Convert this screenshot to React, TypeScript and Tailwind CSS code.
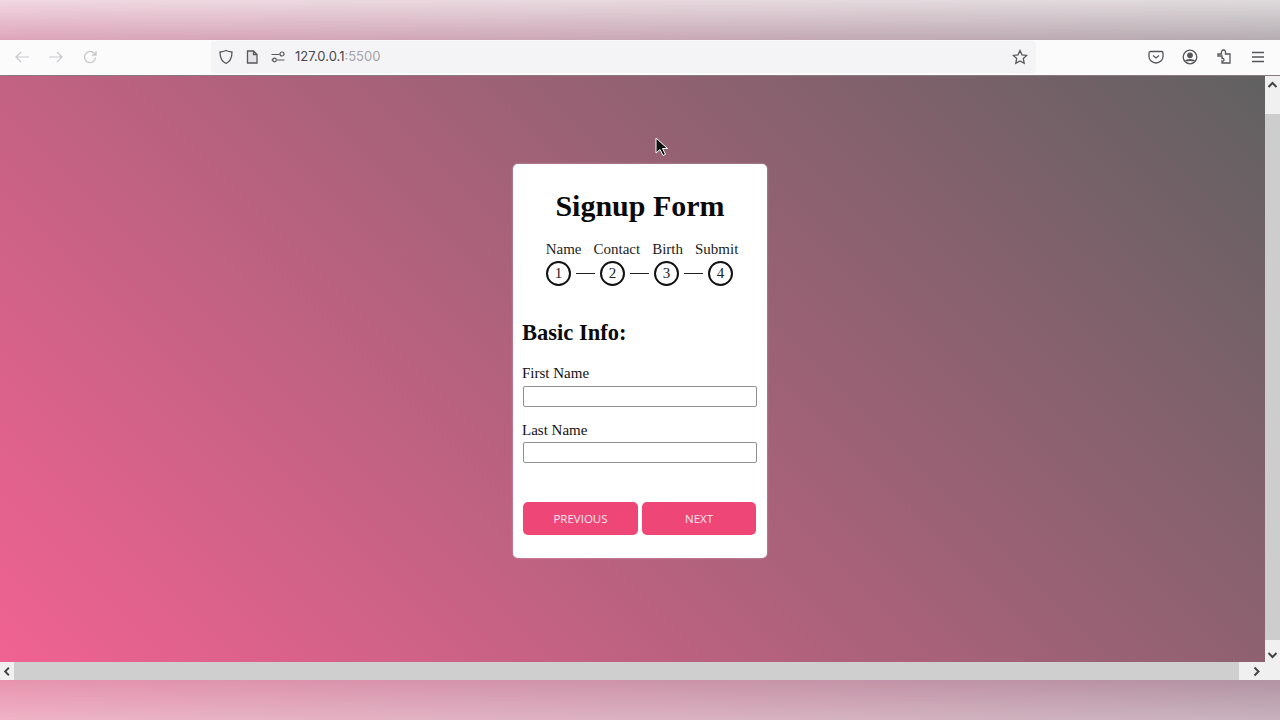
import React from 'react';

const serif = 'font-["Liberation_Serif",serif]';

const Toolbar: React.FC = () => (
  <div className="flex h-[36px] items-center bg-[#fbfbfc] border-b border-[#8a7a80] pb-[2px] font-['Inter',sans-serif]">
    <div className="flex w-[211px] items-center pl-[14px] gap-[18px] text-[#c9c9cc]">
      <svg width="16" height="16" viewBox="0 0 16 16" fill="none" stroke="currentColor" strokeWidth="1.2"><path d="M15 8H2M7 3L2 8l5 5" /></svg>
      <svg width="16" height="16" viewBox="0 0 16 16" fill="none" stroke="currentColor" strokeWidth="1.2"><path d="M1 8h13M9 3l5 5-5 5" /></svg>
      <svg width="16" height="16" viewBox="0 0 16 16" fill="none" stroke="currentColor" strokeWidth="1.4"><path d="M13.5 8.5A5.5 5.5 0 1 1 11.5 3.8L14 6M14 2v4h-4" /></svg>
    </div>
    <div className="flex h-[32px] w-[825px] items-center rounded bg-[#f4f4f6] pl-[7px] text-[#57575c]">
      <svg width="16" height="16" viewBox="0 0 16 16" fill="none" stroke="currentColor" strokeWidth="1.3"><path d="M8 1.5c2 1 3.7 1.4 6 1.5 0 5-1.5 9.500-6 11.500C3.500 12.500 2 8 2 3c2.300-.1 4-.5 6-1.500z" /></svg>
      <svg className="ml-[10px]" width="16" height="16" viewBox="0 0 16 16" fill="none" stroke="currentColor" strokeWidth="1.3"><path d="M3.500 2h6L13 5.500V14H3.500zM9.500 2v3.500H13" fill="#e4e4e8" /></svg>
      <svg className="ml-[10px]" width="16" height="16" viewBox="0 0 16 16" fill="none" stroke="currentColor" strokeWidth="1.200"><path d="M1.500 5.500h8M1.500 11h2M7 11h7.500" /><circle cx="12" cy="5" r="2" /><circle cx="4.500" cy="11" r="1.800" /></svg>
      <span className="ml-[9px] text-[13px] text-[#48484d]">127.0.0.1<span className="text-[#a4a4a8]">:5500</span></span>
      <svg className="ml-auto mr-[8px]" width="16" height="16" viewBox="0 0 16 16" fill="none" stroke="currentColor" strokeWidth="1.300"><path d="M8 1.500l2 4.300 4.700.6-3.400 3.200.9 4.700L8 12l-4.200 2.300.9-4.700L1.300 6.400 6 5.800z" /></svg>
    </div>
    <div className="ml-auto flex items-center gap-[18px] pr-[14px] text-[#55555a]">
      <svg width="16" height="16" viewBox="0 0 16 16" fill="none" stroke="currentColor" strokeWidth="1.300"><path d="M2.500 2.500h11a1.500 1.500 0 0 1 1.500 1.500v3.500a7 6.500 0 0 1-14 0V4a1.500 1.500 0 0 1 1.500-1.500zM5 6.500L8 9l3-2.500" /></svg>
      <svg width="16" height="16" viewBox="0 0 16 16" fill="none" stroke="currentColor" strokeWidth="1.300"><circle cx="8" cy="8" r="6.800" /><circle cx="8" cy="6.300" r="2.200" fill="currentColor" /><path d="M3.800 12c1-1.500 7.400-1.500 8.400 0" strokeWidth="2" /></svg>
      <svg width="16" height="16" viewBox="0 0 16 16" fill="none" stroke="currentColor" strokeWidth="1.300"><path d="M2 5h3.500C5 2.500 6 1 7.500 1S10 2.500 9.500 5H14v9H6v-2c1.200.5 2-.3 2-1.300S7.200 9 6 9.500V7H2z" /></svg>
      <svg width="16" height="16" viewBox="0 0 16 16" fill="none" stroke="currentColor" strokeWidth="1.300"><path d="M2 3.500h12M2 8h12M2 12.500h12" /></svg>
    </div>
  </div>
);

const steps = [
  { label: 'Name', n: 1 },
  { label: 'Contact', n: 2 },
  { label: 'Birth', n: 3 },
  { label: 'Submit', n: 4 },
];

const Field: React.FC<{ label: string; labelClass?: string }> = ({ label, labelClass }) => (
  <div className="flex flex-col">
    <label className={`h-[21px] text-[15px] leading-[17px] text-[#111] ${labelClass ?? ''}`}>{label}</label>
    <input className="mx-[1px] h-[21px] w-[234px] rounded-[2px] border border-[#8f8f8f] bg-white" />
  </div>
);

const Card: React.FC = () => (
  <div className={`${serif} flex h-[394px] w-[254px] flex-col rounded-[5px] bg-white px-[9px] pt-[25px] text-[#0a0a0a] shadow-[0_0_2px_rgba(255,255,255,0.5)]`}>
    <h1 className="text-center text-[30px] font-bold leading-[34px]">Signup Form</h1>
    <div className="mt-[18px] flex justify-center gap-[12px] pl-[4px] text-[15px] leading-[17px] text-[#222]">
      {steps.map((s) => (
        <span key={s.label}>{s.label}</span>
      ))}
    </div>
    <div className="mt-[3px] flex items-center justify-center pr-[1px]">
      {steps.map((s, i) => (
        <React.Fragment key={s.n}>
          {i > 0 && <div className="mx-[5px] h-[1.500px] w-[19px] bg-[#222]" />}
          <div className="flex h-[25px] w-[25px] items-center justify-center rounded-full border-2 border-[#111] text-[15px] text-[#222]">{s.n}</div>
        </React.Fragment>
      ))}
    </div>
    <h2 className="mt-[34px] text-[22.500px] font-bold leading-[26px]">Basic Info:</h2>
    <div className="mt-[19px] flex flex-col gap-[14px]">
      <Field label="First Name" />
      <Field label="Last Name" labelClass="pt-[1px]" />
    </div>
    <div className="mt-[39px] flex gap-[4px] px-[1px] font-['Open_Sans',sans-serif] text-[11.500px] text-[#fde8ee]">
      <button className="h-[33px] w-[115px] rounded-[5px] bg-[#ee4676]">PREVIOUS</button>
      <button className="h-[33px] w-[114px] rounded-[5px] bg-[#ee4676]">NEXT</button>
    </div>
  </div>
);

const App: React.FC = () => (
  <div className="relative flex h-[720px] w-[1280px] flex-col overflow-hidden bg-white">
    <div className="h-[40px] bg-[linear-gradient(180deg,rgba(255,255,255,0.62),rgba(255,255,255,0.12)),linear-gradient(90deg,#d998b0,#aaa0a5)]" />
    <Toolbar />
    <div className="flex h-[586px]">
      <div className="flex flex-1 justify-center bg-[linear-gradient(45deg,#f06292,#616161)] pl-[15px] pt-[88px]">
        <Card />
      </div>
      <div className="flex w-[15px] flex-col items-center bg-[#f0f0f0]">
        <svg className="mt-[2px]" width="15" height="15" viewBox="0 0 15 15" fill="none" stroke="#444" strokeWidth="2"><path d="M3.500 9l4-4 4 4" /></svg>
        <div className="mt-[21px] flex-1 w-full bg-[#cdcdcd]" />
        <div className="flex h-[22px] w-full items-center justify-center">
          <svg className="mt-[6px]" width="15" height="15" viewBox="0 0 15 15" fill="none" stroke="#444" strokeWidth="2"><path d="M3.500 6l4 4 4-4" /></svg>
        </div>
      </div>
    </div>
    <div className="flex h-[18px] items-center bg-[#cfcfcf]">
      <div className="flex h-full w-[14px] items-center justify-center bg-[#f0f0f0]">
        <svg width="15" height="15" viewBox="0 0 15 15" fill="none" stroke="#444" strokeWidth="2"><path d="M9.500 3.500l-4 4 4 4" /></svg>
      </div>
      <div className="flex-1" />
      <div className="flex h-full w-[41px] items-center justify-center bg-[#f0f0f0] pr-[7px]">
        <svg width="15" height="15" viewBox="0 0 15 15" fill="none" stroke="#444" strokeWidth="2"><path d="M5.500 3.500l4 4-4 4" /></svg>
      </div>
    </div>
    <div className="h-[40px] bg-[linear-gradient(180deg,rgba(255,255,255,0.08),rgba(255,255,255,0.35)),linear-gradient(90deg,#e68aa8,#ab8a9b)]" />
    <svg className="absolute left-[655px] top-[137px]" width="13" height="20" viewBox="0 0 13 20"><path d="M1 1v15l4-3.500 3 6 2.500-1.200-3-5.800h5z" fill="#111" stroke="#fff" strokeWidth="1" /></svg>
  </div>
);

export default App;
